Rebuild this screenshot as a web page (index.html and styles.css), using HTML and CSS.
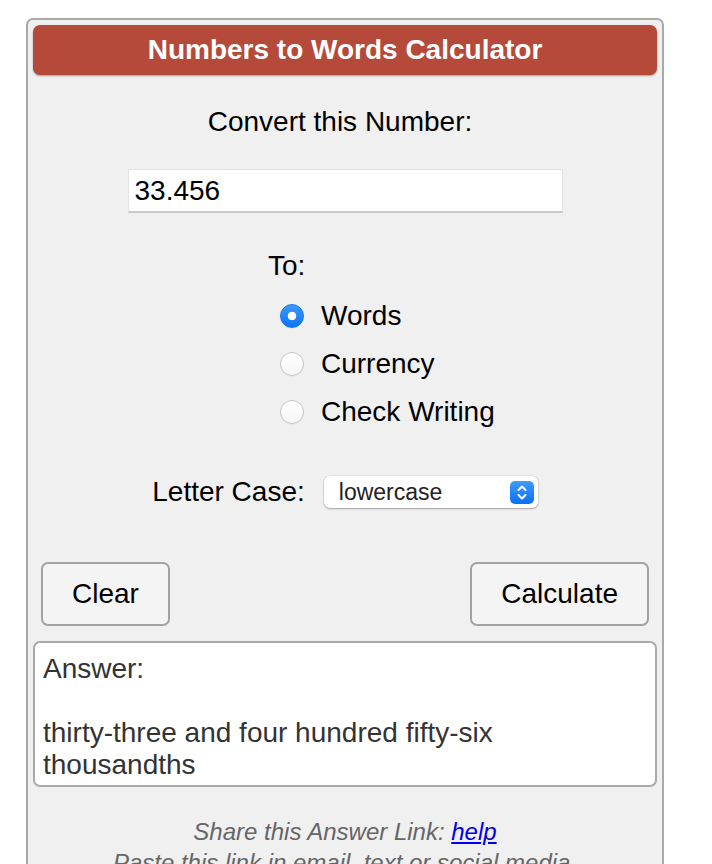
FILE: index.html
```html
<!DOCTYPE html>
<html lang="en">
<head>
<meta charset="utf-8">
<title>Numbers to Words Calculator</title>
<link rel="stylesheet" href="styles.css">
</head>
<body>
<div class="page">
  <div class="panel">
    <div class="title">Numbers to Words Calculator</div>
    <div class="field-label">Convert this Number:</div>
    <input class="num-input" type="text" value="33.456">
    <div class="to-group">
      <div class="to-label">To:</div>
      <label class="radio-row first"><input class="radio" type="radio" name="to" checked><span>Words</span></label>
      <label class="radio-row"><input class="radio" type="radio" name="to"><span>Currency</span></label>
      <label class="radio-row"><input class="radio" type="radio" name="to"><span>Check Writing</span></label>
    </div>
    <div class="case-row">
      <span class="case-label">Letter Case:</span>
      <div class="select">
        <span class="select-text">lowercase</span>
        <svg class="stepper" width="24" height="23" viewBox="0 0 24 23">
          <defs>
            <linearGradient id="stepg" x1="0" y1="0" x2="0" y2="1">
              <stop offset="0" stop-color="#3f9cff"/>
              <stop offset="1" stop-color="#0b70f3"/>
            </linearGradient>
          </defs>
          <rect x="0" y="0" width="24" height="23" rx="5" fill="url(#stepg)"/>
          <polyline points="8.5,9 12,5.5 15.5,9" fill="none" stroke="#fff" stroke-width="2" stroke-linecap="round" stroke-linejoin="round"/>
          <polyline points="8.5,14 12,17.5 15.5,14" fill="none" stroke="#fff" stroke-width="2" stroke-linecap="round" stroke-linejoin="round"/>
        </svg>
      </div>
    </div>
    <div class="buttons">
      <button class="btn" type="button">Clear</button>
      <button class="btn" type="button">Calculate</button>
    </div>
    <div class="answer">Answer:<br><br>thirty-three and four hundred fifty-six thousandths</div>
    <div class="share">Share this Answer Link: <a class="help" href="#">help</a><br>Paste this link in email, text or social media.</div>
  </div>
</div>
</body>
</html>
```
FILE: styles.css
```css
html, body {
  margin: 0;
  padding: 0;
  background: #ffffff;
}
body {
  font-family: "Liberation Sans", Arial, Helvetica, sans-serif;
  color: #000;
}
.page {
  padding: 18px 0 0 26px;
}
.panel {
  width: 624px;
  border: 2px solid #a9a9a9;
  border-radius: 7px;
  background: #f0f0f0;
  padding: 5px 5px 60px 5px;
}
.title {
  height: 50px;
  line-height: 50px;
  background: #b54a3a;
  color: #fff;
  font-weight: bold;
  font-size: 28px;
  text-align: center;
  border-radius: 7px;
  box-shadow: 0 1px 2px rgba(0, 0, 0, 0.35);
}
.field-label {
  margin-top: 31px;
  font-size: 28px;
  line-height: 32px;
  text-align: center;
  padding-right: 10px;
}
.num-input {
  display: block;
  box-sizing: border-box;
  margin: 31px auto 0 auto;
  width: 435px;
  height: 44px;
  border: 1px solid #e4e4e4;
  border-bottom: 2px solid #c9c9c9;
  background: #fff;
  font-family: inherit;
  font-size: 28px;
  padding: 0 6px;
  color: #000;
  outline: none;
}
.to-group {
  margin-top: 37px;
  margin-left: 235px;
}
.to-label {
  font-size: 28px;
  line-height: 32px;
}
.radio-row {
  display: flex;
  align-items: center;
  gap: 17px;
  height: 32px;
  margin-top: 16px;
  margin-left: 12px;
  font-size: 28px;
  line-height: 32px;
}
.radio-row.first {
  margin-top: 18px;
}
.radio {
  appearance: none;
  -webkit-appearance: none;
  box-sizing: border-box;
  width: 24px;
  height: 24px;
  margin: 0;
  border-radius: 50%;
  border: 1px solid #c6c6c6;
  background: linear-gradient(#ffffff, #f6f6f6);
  box-shadow: 0 0.5px 1px rgba(0, 0, 0, 0.08);
}
.radio:checked {
  border: 1px solid #1577ee;
  background: radial-gradient(circle, #ffffff 0 4px, transparent 4.6px), linear-gradient(#3c9bff, #0b72f4);
}
.case-row {
  display: flex;
  justify-content: center;
  align-items: center;
  gap: 19px;
  margin-top: 48px;
  height: 32px;
}
.case-label {
  font-size: 28px;
  line-height: 32px;
}
.select {
  box-sizing: border-box;
  width: 214px;
  height: 32px;
  display: flex;
  align-items: center;
  justify-content: space-between;
  padding: 0 4px 0 15px;
  background: #fff;
  border-radius: 6px;
  box-shadow: 0 0 0 0.5px rgba(0, 0, 0, 0.12), 0 1px 2px rgba(0, 0, 0, 0.28);
}
.select-text {
  font-size: 23px;
  color: #222;
}
.stepper {
  display: block;
}
.buttons {
  display: flex;
  justify-content: space-between;
  padding: 0 8px;
  margin-top: 54px;
}
.btn {
  box-sizing: border-box;
  height: 64px;
  padding: 0 29px;
  font-family: inherit;
  font-size: 28px;
  color: #000;
  background: #f4f4f4;
  border: 2px solid #a2a2a2;
  border-radius: 7px;
}
.answer {
  margin-top: 15px;
  background: #fff;
  border: 2px solid #a9a9a9;
  border-radius: 7px;
  padding: 10px 12px 4px 8px;
  font-size: 28px;
  line-height: 32px;
  color: #333;
}
.share {
  margin-top: 29px;
  text-align: center;
  font-style: italic;
  font-size: 24px;
  line-height: 31px;
  color: #666;
}
.help {
  color: #0000ee;
  text-decoration: underline;
}
```
